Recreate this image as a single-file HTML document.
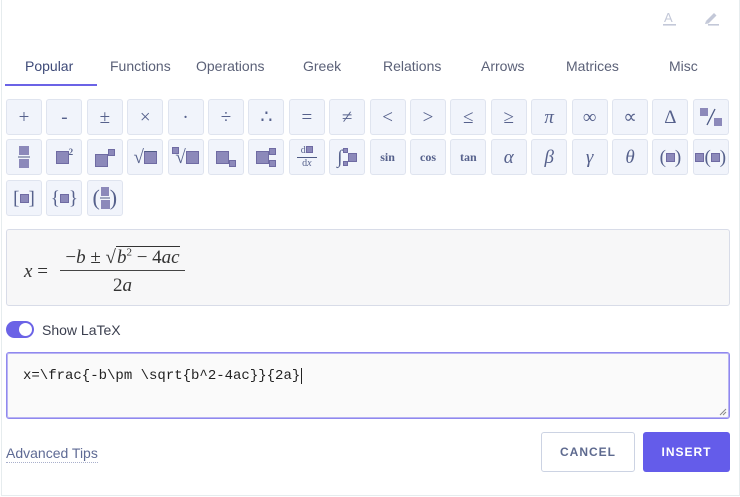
<!DOCTYPE html>
<html><head><meta charset="utf-8"><style>
*{box-sizing:border-box;margin:0;padding:0}
body{width:740px;height:497px;background:#fff;font-family:"Liberation Sans",sans-serif;position:relative;overflow:hidden}
.frame{position:absolute;left:1px;top:0;width:739px;height:496px;border:1px solid #e6ecee;border-top:none}
.tabs{position:absolute;top:58px;left:0;width:740px;height:30px;font-size:14px;color:#5b6178}
.tabs span{position:absolute;top:0}
.tabs .act{color:#3e4a78}
.ul{position:absolute;left:5px;top:84px;width:92px;height:2px;background:#6b63e6}
.row{position:absolute;left:6px;height:36px}
.b{position:absolute;top:0;width:36px;height:36px;background:#f1f4fb;border:1px solid #dfe4ef;border-radius:3px;display:flex;align-items:center;justify-content:center;color:#56618c;font-family:"Liberation Serif",serif;font-size:19px;line-height:1}
.sq{display:inline-block;width:13px;height:13px;background:#8c89ba;border:1px solid #6f6ba3}
.s{width:7px;height:7px}
.fn{font-weight:bold;font-size:12px}
.it{font-style:italic}
.box{position:absolute;left:6px;top:229px;width:724px;height:77px;border:1px solid #d8dce8;border-radius:3px;background:#f7f7f8}
.tog{position:absolute;left:6px;top:321px;width:28px;height:17px;border-radius:9px;background:#6b63e6}
.tog i{position:absolute;right:2px;top:2px;width:13px;height:13px;border-radius:50%;background:#fff}
.ta{position:absolute;left:6px;top:352px;width:724px;height:67px;border:1px solid #8f88ef;border-radius:3px;background:#fafafa;box-shadow:0 0 0 1px #b9b4f3 inset}
.btn{position:absolute;top:432px;height:40px;border-radius:3px;font-size:12px;font-weight:bold;letter-spacing:1px;display:flex;align-items:center;justify-content:center}
.m{position:absolute;font-family:'Liberation Serif',serif;font-size:19px;color:#333;white-space:nowrap;line-height:1}
</style></head><body>
<div class="frame"></div>
<svg style="position:absolute;left:660px;top:9px" width="20" height="18" viewBox="0 0 20 18"><text x="4" y="13" font-family="Liberation Sans" font-size="13" fill="#c3c8d8">A</text><rect x="3" y="15" width="13" height="1.6" fill="#c3c8d8"/></svg>
<svg style="position:absolute;left:702px;top:9px" width="20" height="18" viewBox="0 0 20 18"><path d="M4 12 L12 4 L14.5 6.5 L6.5 14.5 Z" fill="#c3c8d8"/><path d="M3 15 L4 12 L6.5 14.5 Z" fill="#c3c8d8"/><rect x="6" y="15" width="11" height="1.6" fill="#c3c8d8"/></svg>
<div class="tabs">
<span class="act" style="left:25px">Popular</span>
<span style="left:110px">Functions</span>
<span style="left:196px">Operations</span>
<span style="left:303px">Greek</span>
<span style="left:383px">Relations</span>
<span style="left:481px">Arrows</span>
<span style="left:566px">Matrices</span>
<span style="left:669px">Misc</span>
</div>
<div class="ul"></div>

<div class="row" style="top:99px">
<div class="b" style="left:0px">+</div>
<div class="b" style="left:40.4px">-</div>
<div class="b" style="left:80.8px">±</div>
<div class="b" style="left:121.2px">×</div>
<div class="b" style="left:161.6px">·</div>
<div class="b" style="left:202px">÷</div>
<div class="b" style="left:242.4px">∴</div>
<div class="b" style="left:282.8px">=</div>
<div class="b" style="left:323.2px">≠</div>
<div class="b" style="left:363.6px">&lt;</div>
<div class="b" style="left:404px">&gt;</div>
<div class="b" style="left:444.4px">≤</div>
<div class="b" style="left:484.8px">≥</div>
<div class="b it" style="left:525.2px">π</div>
<div class="b" style="left:565.6px">∞</div>
<div class="b" style="left:606px">∝</div>
<div class="b" style="left:646.4px">Δ</div>
<div class="b" style="left:686.8px"><svg width="24" height="20"><rect x="1" y="1" width="8" height="8" fill="#8c89ba"/><rect x="15" y="11" width="8" height="8" fill="#8c89ba"/><path d="M8 18 L16 2" stroke="#4e5a85" stroke-width="1.3"/></svg></div>
</div>

<div class="row" style="top:139px">
<div class="b" style="left:0px"><svg width="12" height="24"><rect x="1" y="1" width="10" height="9" fill="#8c89ba"/><rect x="0" y="11.5" width="12" height="1" fill="#4e5a85"/><rect x="1" y="14" width="10" height="9" fill="#8c89ba"/></svg></div>
<div class="b" style="left:40.4px"><span class="sq"></span><sup style="font-size:9px;font-weight:bold;margin-top:-10px">2</sup></div>
<div class="b" style="left:80.8px"><span class="sq" style="margin-top:6px"></span><span class="sq s" style="margin-top:-10px"></span></div>
<div class="b" style="left:121.2px">√<span class="sq" style="border-top:1.5px solid #4e5a85"></span></div>
<div class="b" style="left:161.6px"><span class="sq s" style="margin:-14px -4px 0 0"></span>√<span class="sq"></span></div>
<div class="b" style="left:202px"><span class="sq"></span><span class="sq s" style="margin-top:12px"></span></div>
<div class="b" style="left:242.4px"><span class="sq"></span><span style="display:inline-flex;flex-direction:column;gap:5px"><span class="sq s"></span><span class="sq s"></span></span></div>
<div class="b" style="left:282.8px;font-size:10px;flex-direction:column"><span>d<span class="sq s"></span></span><span style="width:20px;height:1px;background:#4e5a85;margin:1px 0"></span><span>d<i>x</i></span></div>
<div class="b" style="left:323.2px"><i>∫</i><span style="display:inline-flex;flex-direction:column;gap:8px;margin-left:1px"><span class="sq s" style="width:5px;height:5px"></span><span class="sq s" style="width:5px;height:5px"></span></span><span class="sq s" style="width:9px;height:9px"></span></div>
<div class="b fn" style="left:363.6px">sin</div>
<div class="b fn" style="left:404px">cos</div>
<div class="b fn" style="left:444.4px">tan</div>
<div class="b it" style="left:484.8px">α</div>
<div class="b it" style="left:525.2px">β</div>
<div class="b it" style="left:565.6px">γ</div>
<div class="b it" style="left:606px">θ</div>
<div class="b" style="left:646.4px">(<span class="sq" style="width:9px;height:9px"></span>)</div>
<div class="b" style="left:686.8px"><span class="sq" style="width:9px;height:9px"></span>(<span class="sq" style="width:9px;height:9px"></span>)</div>
</div>

<div class="row" style="top:180px">
<div class="b" style="left:0px">[<span class="sq" style="width:9px;height:9px"></span>]</div>
<div class="b" style="left:40.4px">{<span class="sq" style="width:9px;height:9px"></span>}</div>
<div class="b" style="left:80.8px;font-size:22px">(<svg width="10" height="24"><rect x="1" y="1" width="8" height="9" fill="#8c89ba"/><rect x="0" y="11.5" width="10" height="1" fill="#4e5a85"/><rect x="1" y="14" width="10" height="9" fill="#8c89ba"/></svg>)</div>
</div>

<div class="box"></div>
<div class="m" style="left:24px;top:262px"><i>x</i> =</div>
<div class="m" style="left:60px;top:248px;width:125px;text-align:center">−<i>b</i> ± √<span style="border-top:1px solid #333;padding-left:1px"><i>b</i><sup style="font-size:11px;line-height:0">2</sup> − 4<i>ac</i></span></div>
<div style="position:absolute;left:60px;top:270px;width:125px;height:1px;background:#444"></div>
<div class="m" style="left:60px;top:276px;width:125px;text-align:center">2<i>a</i></div>

<div class="tog"><i></i></div>
<div style="position:absolute;left:42px;top:322px;font-size:14px;color:#3b3f4f">Show LaTeX</div>

<div class="ta"><div style="position:absolute;left:16px;top:15px;font-family:'Liberation Mono',monospace;font-size:14px;color:#222;white-space:pre">x=\frac{-b\pm \sqrt{b^2-4ac}}{2a}<span style="border-left:1px solid #222;margin-left:1px"></span></div>
<svg style="position:absolute;right:2px;bottom:2px" width="8" height="8"><path d="M1 7 L7 1 M4 7 L7 4" stroke="#888" stroke-width="1"/></svg></div>

<div style="position:absolute;left:6px;top:445px;font-size:14px;color:#5e6a94;border-bottom:1px dotted #a9b0cc;line-height:17px">Advanced Tips</div>
<div class="btn" style="left:541px;width:94px;border:1px solid #ccd3e3;color:#5e6a8f;background:#fff">CANCEL</div>
<div class="btn" style="left:643px;width:87px;background:#645cea;color:#fff">INSERT</div>
</body></html>
